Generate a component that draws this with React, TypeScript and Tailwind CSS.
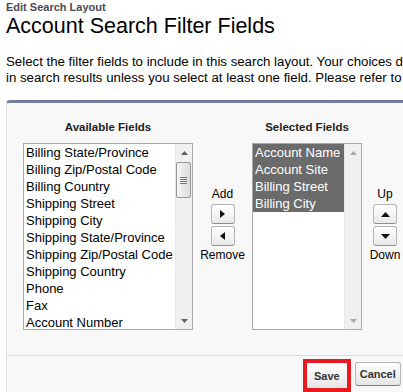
import React from "react";

const available = [
  "Billing State/Province",
  "Billing Zip/Postal Code",
  "Billing Country",
  "Shipping Street",
  "Shipping City",
  "Shipping State/Province",
  "Shipping Zip/Postal Code",
  "Shipping Country",
  "Phone",
  "Fax",
  "Account Number",
];

const selected = ["Account Name", "Account Site", "Billing Street", "Billing City"];

function UpGlyph({ color }: { color: string }) {
  return (
    <svg width="7" height="4" viewBox="0 0 7 4">
      <path d="M3.5 0 L7 4 L0 4 Z" fill={color} />
    </svg>
  );
}

function DownGlyph({ color }: { color: string }) {
  return (
    <svg width="7" height="4" viewBox="0 0 7 4">
      <path d="M0 0 L7 0 L3.5 4 Z" fill={color} />
    </svg>
  );
}

function Scrollbar({ thumb }: { thumb: boolean }) {
  const c = thumb ? "#606060" : "#a8a8a8";
  return (
    <div className="w-[17px] h-full flex flex-col bg-[#f0f0f0] border-l border-[#e8e8e8]">
      <div className="h-[17px] flex items-center justify-center">
        <UpGlyph color={c} />
      </div>
      <div className="flex-1 relative">
        {thumb && (
          <div className="absolute left-0 right-[1px] top-[1px] h-[36px] rounded-[2px] border border-[#979797] bg-gradient-to-r from-[#f4f4f4] to-[#dcdcdc] flex flex-col items-center justify-center gap-[1px]">
            <div className="w-[7px] h-[1px] bg-[#7a7a7a]" />
            <div className="w-[7px] h-[1px] bg-[#7a7a7a]" />
            <div className="w-[7px] h-[1px] bg-[#7a7a7a]" />
            <div className="w-[7px] h-[1px] bg-[#7a7a7a]" />
          </div>
        )}
      </div>
      <div className="h-[17px] flex items-center justify-center">
        <DownGlyph color={c} />
      </div>
    </div>
  );
}

function ArrowButton({ dir }: { dir: "right" | "left" | "up" | "down" }) {
  let path = "";
  let w = 5;
  let h = 8;
  if (dir === "right") path = "M0 0 L5 4 L0 8 Z";
  if (dir === "left") path = "M5 0 L0 4 L5 8 Z";
  if (dir === "up") {
    w = 9;
    h = 5;
    path = "M4.5 0 L9 5 L0 5 Z";
  }
  if (dir === "down") {
    w = 9;
    h = 5;
    path = "M0 0 L9 0 L4.5 5 Z";
  }
  return (
    <div className="w-[24px] h-[20px] rounded-[3px] border border-[#b5b5b5] border-b-[#8f8f8f] bg-gradient-to-b from-white to-[#e9e9e9] flex items-center justify-center">
      <svg width={w} height={h} viewBox={`0 0 ${w} ${h}`}>
        <path d={path} fill="#111" />
      </svg>
    </div>
  );
}

export default function App() {
  return (
    <div className="w-[403px] h-[392px] overflow-hidden bg-white font-['Liberation_Sans',Arial,sans-serif] text-black">
      <div className="pl-[6px] pt-[1px] whitespace-nowrap">
        <div className="text-[11px] leading-[13px] font-bold text-[#4a4a56]">Edit Search Layout</div>
        <h1 className="text-[21.5px] leading-[24px] font-normal">Account Search Filter Fields</h1>
        <p className="mt-[16px] text-[13.25px] leading-[16px]">
          Select the filter fields to include in this search layout. Your choices determine which filters are shown
          <br />
          in search results unless you select at least one field. Please refer to the online help for details.
        </p>
      </div>

      <div className="ml-[6px] mt-[14px] w-[520px] rounded-tl-[4px] border-t-[3px] border-l border-t-[#747e96] border-l-[#e3e3e3] bg-[#f8f8f8]">
        <div className="pl-[16px] pt-[17px] pb-[25px]">
          <div className="flex">
            <div className="w-[170px] text-center text-[11.5px] leading-[14px] font-bold text-[#222]">Available Fields</div>
            <div className="w-[59px]" />
            <div className="w-[110px] text-center text-[11.5px] leading-[14px] font-bold text-[#222]">Selected Fields</div>
          </div>
          <div className="flex mt-[9px]">
            <div className="w-[170px] h-[187px] border border-[#a9a9a9] bg-white flex overflow-hidden">
              <div className="w-[151px] overflow-hidden">
                {available.map((a) => (
                  <div key={a} className="h-[17px] leading-[17px] text-[13px] pl-[2px] whitespace-nowrap">
                    {a}
                  </div>
                ))}
              </div>
              <Scrollbar thumb />
            </div>
            <div className="w-[59px] flex flex-col items-center pt-[44px] text-[12px] leading-[14px]">
              <div>Add</div>
              <div className="mt-[3px]">
                <ArrowButton dir="right" />
              </div>
              <div className="mt-[2px]">
                <ArrowButton dir="left" />
              </div>
              <div className="mt-[2px]">Remove</div>
            </div>
            <div className="w-[110px] h-[187px] border border-[#a9a9a9] bg-white flex overflow-hidden">
              <div className="w-[91px]">
                {selected.map((s) => (
                  <div key={s} className="h-[17px] leading-[17px] text-[13px] pl-[2px] whitespace-nowrap bg-[#6b6b6b] text-white">
                    {s}
                  </div>
                ))}
              </div>
              <Scrollbar thumb={false} />
            </div>
            <div className="w-[46px] flex flex-col items-center pt-[44px] text-[12px] leading-[14px]">
              <div>Up</div>
              <div className="mt-[3px]">
                <ArrowButton dir="up" />
              </div>
              <div className="mt-[2px]">
                <ArrowButton dir="down" />
              </div>
              <div className="mt-[2px]">Down</div>
            </div>
          </div>
        </div>
        <div className="border-t border-[#dbdbdb] h-[40px] flex items-start pl-[296px] pt-[3px]">
          <div className="border-[4px] border-[#e8191f] p-0">
            <button className="h-[24px] px-[7px] text-[11px] font-bold text-[#333] bg-gradient-to-b from-white to-[#e6e6e6]">
              Save
            </button>
          </div>
          <button className="ml-[4px] mt-[3px] h-[24px] px-[4px] rounded-[3px] border border-[#b5b5b5] border-b-[#7f7f7f] text-[11px] font-bold text-[#333] bg-gradient-to-b from-white to-[#e6e6e6]">
            Cancel
          </button>
        </div>
      </div>
    </div>
  );
}
